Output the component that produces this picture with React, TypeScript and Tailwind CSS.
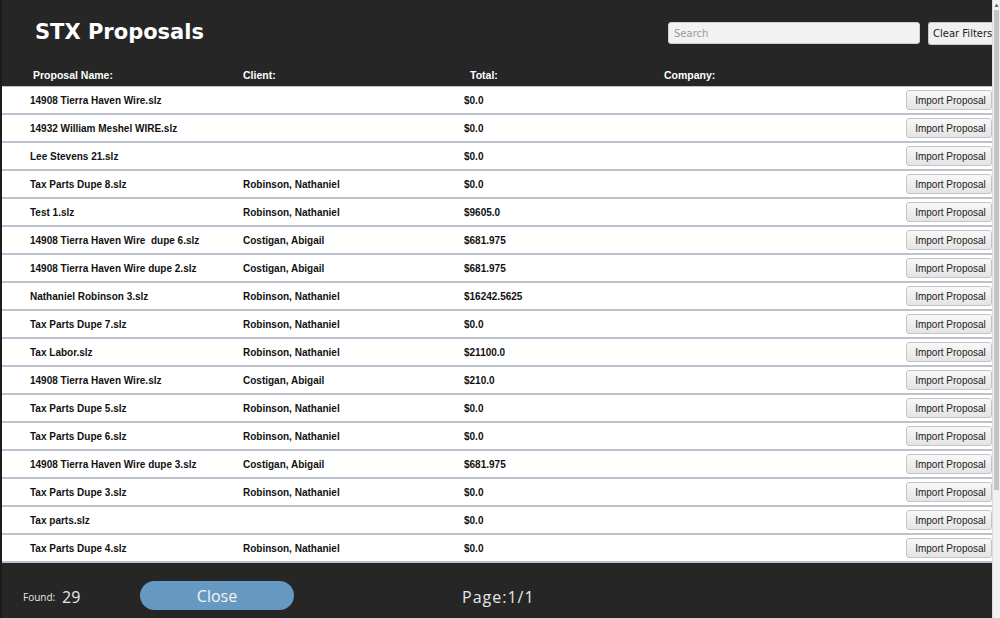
import React from 'react';

type Row = { name: string; client: string; total: string };

const rows: Row[] = [
  { name: '14908 Tierra Haven Wire.slz', client: '', total: '$0.0' },
  { name: '14932 William Meshel WIRE.slz', client: '', total: '$0.0' },
  { name: 'Lee Stevens 21.slz', client: '', total: '$0.0' },
  { name: 'Tax Parts Dupe 8.slz', client: 'Robinson, Nathaniel', total: '$0.0' },
  { name: 'Test 1.slz', client: 'Robinson, Nathaniel', total: '$9605.0' },
  { name: '14908 Tierra Haven Wire  dupe 6.slz', client: 'Costigan, Abigail', total: '$681.975' },
  { name: '14908 Tierra Haven Wire dupe 2.slz', client: 'Costigan, Abigail', total: '$681.975' },
  { name: 'Nathaniel Robinson 3.slz', client: 'Robinson, Nathaniel', total: '$16242.5625' },
  { name: 'Tax Parts Dupe 7.slz', client: 'Robinson, Nathaniel', total: '$0.0' },
  { name: 'Tax Labor.slz', client: 'Robinson, Nathaniel', total: '$21100.0' },
  { name: '14908 Tierra Haven Wire.slz', client: 'Costigan, Abigail', total: '$210.0' },
  { name: 'Tax Parts Dupe 5.slz', client: 'Robinson, Nathaniel', total: '$0.0' },
  { name: 'Tax Parts Dupe 6.slz', client: 'Robinson, Nathaniel', total: '$0.0' },
  { name: '14908 Tierra Haven Wire dupe 3.slz', client: 'Costigan, Abigail', total: '$681.975' },
  { name: 'Tax Parts Dupe 3.slz', client: 'Robinson, Nathaniel', total: '$0.0' },
  { name: 'Tax parts.slz', client: '', total: '$0.0' },
  { name: 'Tax Parts Dupe 4.slz', client: 'Robinson, Nathaniel', total: '$0.0' },
];

function ProposalRow({ row }: { row: Row }) {
  return (
    <div className="h-[28px] flex items-center bg-white border-b-2 border-[#bcc3cf] text-[10px] font-bold text-[#111]">
      <span className="w-[241px] pl-[28px] whitespace-pre">{row.name}</span>
      <span className="w-[221px]">{row.client}</span>
      <span className="flex-1">{row.total}</span>
      <button className="h-[20px] w-[86px] pl-[3px] rounded-[3px] border border-[#c4c4c4] bg-gradient-to-b from-[#f8f8f8] to-[#e4e4e4] text-[10px] font-normal text-[#222]">
        Import Proposal
      </button>
    </div>
  );
}

export default function App() {
  return (
    <div className="w-[1000px] h-[618px] overflow-hidden flex bg-[#262626] font-['Liberation_Sans',Arial,sans-serif]">
      <div className="flex-1 flex flex-col min-w-0 border-l-2 border-[#1c1c1c]">
        {/* header */}
        <div className="h-[64px] flex items-start">
          <h1 className="pl-[33px] pt-[17px] text-[21px] font-bold text-white font-['DejaVu_Sans',Verdana,sans-serif]">
            STX Proposals
          </h1>
          <div className="ml-auto pt-[22px] flex gap-[8px]">
            <input
              placeholder="Search"
              className="w-[252px] h-[22px] rounded-[3px] border border-[#cfcfcf] bg-[#f2f2f2] px-[5px] text-[10px] font-['DejaVu_Sans',Verdana,sans-serif] placeholder:text-[#9a9a9a] outline-none"
            />
            <button className="h-[23px] w-[64px] rounded-l-[3px] border border-r-0 border-[#c8c8c8] bg-[#f0f0f0] pl-[4px] text-left whitespace-nowrap overflow-hidden text-[10px] text-[#222] font-['DejaVu_Sans',Verdana,sans-serif]">
              Clear Filters
            </button>
          </div>
        </div>
        {/* column headers */}
        <div className="h-[22px] pt-[2px] flex items-center text-[10.5px] font-bold text-white">
          <span className="w-[241px] pl-[31px]">Proposal Name:</span>
          <span className="w-[227px]">Client:</span>
          <span className="w-[194px]">Total:</span>
          <span>Company:</span>
        </div>
        {/* rows */}
        <div className="flex flex-col border-t border-[#bcc3cf]">
          {rows.map((r, i) => (
            <ProposalRow key={i} row={r} />
          ))}
        </div>
        {/* footer */}
        <div className="flex-1 flex items-center pl-[21px] pt-[10px] text-[#e6e6e6] font-['Open_Sans',sans-serif]">
          <span className="text-[10px] w-[39px] pt-[4px]">Found:</span>
          <span className="text-[16px] w-[78px] pt-[2px]">29</span>
          <button className="w-[154px] h-[29px] rounded-full bg-[#6699c2] text-[16px] text-[#f4f4f4]">
            Close
          </button>
          <span className="ml-[168px] text-[16px] tracking-[1px] pt-[2px]">Page:1/1</span>
        </div>
      </div>
      {/* scrollbar */}
      <div className="w-[8px] flex flex-col bg-[#f0f0f0] border-l border-[#dcdcdc]">
        <div className="h-[10px] flex items-center justify-center text-[6px] text-[#555]">▲</div>
        <div className="h-[480px] mx-[1px] bg-[#c3c3c3]" />
        <div className="flex-1" />
      </div>
    </div>
  );
}
